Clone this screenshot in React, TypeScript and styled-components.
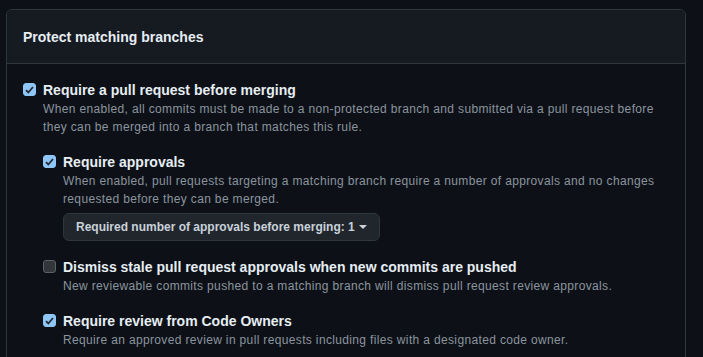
import styled, { createGlobalStyle } from "styled-components";

const GlobalStyle = createGlobalStyle`
  body {
    margin: 0;
    background: #0d1117;
    font-family: "Liberation Sans", Arial, sans-serif;
    -webkit-font-smoothing: antialiased;
  }
`;

const Page = styled.div`
  padding: 9px 17px 0 6px;
  height: 357px;
  box-sizing: border-box;
  overflow: hidden;
`;

const Box = styled.section`
  border: 1px solid #30363d;
  border-radius: 6px;
  background: #0d1117;
  min-height: 400px;
`;

const Header = styled.div`
  height: 53px;
  display: flex;
  align-items: center;
  padding: 0 16px;
  background: #161b22;
  border-bottom: 1px solid #30363d;
  border-radius: 6px 6px 0 0;
`;

const Title = styled.h3`
  margin: 0;
  font-size: 14px;
  font-weight: 600;
  color: #e6edf3;
`;

const Body = styled.div`
  padding: 16px;
`;

const Item = styled.div<{ $nested?: boolean }>`
  margin-top: 16px;
  padding-left: ${(p) => (p.$nested ? "20px" : "0")};
  &:first-child {
    margin-top: 0;
  }
`;

const Row = styled.label`
  display: flex;
  align-items: flex-start;
  gap: 7px;
`;

const Box13 = styled.span<{ $checked: boolean }>`
  flex: none;
  width: 13px;
  height: 13px;
  margin-top: 3px;
  border-radius: 3px;
  box-sizing: border-box;
  display: flex;
  align-items: center;
  justify-content: center;
  background: ${(p) => (p.$checked ? "#8ec6f7" : "#323539")};
  border: 1px solid ${(p) => (p.$checked ? "#8ec6f7" : "#5c5f64")};
`;

const Text = styled.div`
  display: flex;
  flex-direction: column;
`;

const Label = styled.span`
  font-size: 14px;
  line-height: 20px;
  font-weight: 600;
  color: #e6edf3;
`;

const Note = styled.p`
  margin: 0;
  font-size: 12px;
  line-height: 18px;
  letter-spacing: 0.35px;
  color: #8b949e;
`;

const Select = styled.button`
  margin-top: 5px;
  align-self: flex-start;
  height: 28px;
  padding: 0 12px;
  display: flex;
  align-items: center;
  gap: 4px;
  background: #21262d;
  border: 1px solid #30363d;
  border-radius: 6px;
  color: #c9d1d9;
  font-family: inherit;
  font-size: 12px;
  font-weight: 600;
`;

type CheckProps = {
  checked: boolean;
  label: string;
  note: string;
  nested?: boolean;
  children?: React.ReactNode;
};

const Check = ({ checked, label, note, nested, children }: CheckProps) => (
  <Item $nested={nested}>
    <Row>
      <Box13 $checked={checked}>
        {checked ? (
          <svg width="9" height="8" viewBox="0 0 9 8">
            <path
              d="M1 4.2 L3.3 6.5 L8 1"
              fill="none"
              stroke="#24292f"
              strokeWidth="1.8"
            />
          </svg>
        ) : null}
      </Box13>
      <Text>
        <Label>{label}</Label>
        <Note>{note}</Note>
        {children}
      </Text>
    </Row>
  </Item>
);

export default function App() {
  return (
    <>
      <GlobalStyle />
      <Page>
        <Box>
          <Header>
            <Title>Protect matching branches</Title>
          </Header>
          <Body>
            <Check
              checked
              label="Require a pull request before merging"
              note="When enabled, all commits must be made to a non-protected branch and submitted via a pull request before they can be merged into a branch that matches this rule."
            />
            <Check
              nested
              checked
              label="Require approvals"
              note="When enabled, pull requests targeting a matching branch require a number of approvals and no changes requested before they can be merged."
            >
              <Select>
                Required number of approvals before merging: 1
                <svg width="8" height="4" viewBox="0 0 8 4">
                  <path d="M0 0 L8 0 L4 4 Z" fill="#c9d1d9" />
                </svg>
              </Select>
            </Check>
            <Check
              nested
              checked={false}
              label="Dismiss stale pull request approvals when new commits are pushed"
              note="New reviewable commits pushed to a matching branch will dismiss pull request review approvals."
            />
            <Check
              nested
              checked
              label="Require review from Code Owners"
              note="Require an approved review in pull requests including files with a designated code owner."
            />
          </Body>
        </Box>
      </Page>
    </>
  );
}
